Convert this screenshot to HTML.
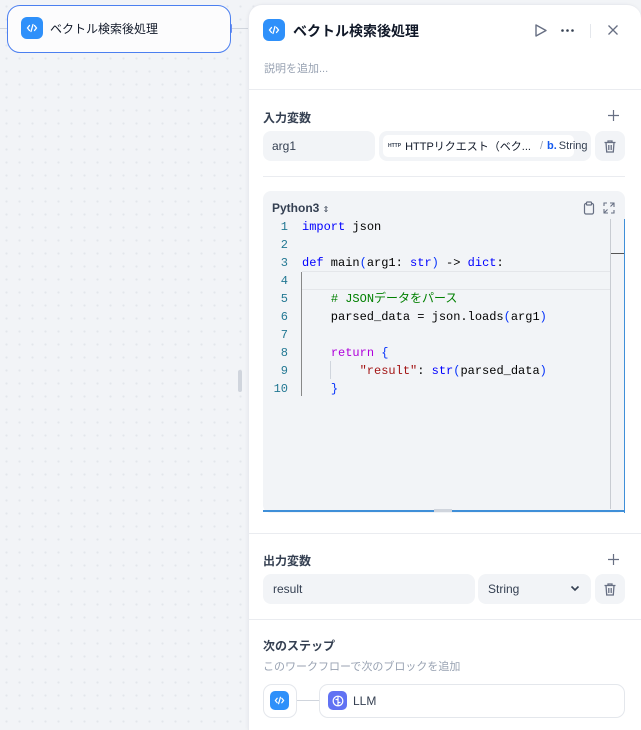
<!DOCTYPE html>
<html><head><meta charset="utf-8">
<style>
*{box-sizing:border-box;margin:0;padding:0}
html,body{width:641px;height:730px;overflow:hidden}
body{position:relative;font-family:"Liberation Sans","Noto Sans CJK JP",sans-serif;background:#f2f4f7;background-image:radial-gradient(#e3e6eb 1px,transparent 1.2px);background-size:13px 13px;color:#101828}
.node{position:absolute;left:7px;top:5px;width:224px;height:48px;background:#fcfcfd;border:1.5px solid #4b7ff0;border-radius:13px}
.ic{position:absolute;background:#2e90fa;border-radius:6px;display:flex;align-items:center;justify-content:center}
.panel{position:absolute;left:248px;top:4px;width:393px;height:726px;background:#fff;border-radius:14px 14px 0 0;border:1px solid #e9ebf0;border-right:none;border-bottom:none;box-shadow:0 1px 4px rgba(0,0,0,.06)}
.abs{position:absolute}
.sep{position:absolute;height:1px;background:#eaecf0}
.field{position:absolute;background:#f2f4f7;border-radius:8px;font-size:12px;color:#354052;display:flex;align-items:center}
.code{position:absolute;left:263px;top:191px;width:362px;height:322px;background:#f2f4f7;border-radius:8px}
.ln{position:absolute;left:268px;width:20px;text-align:right;font:12px/18px "Liberation Mono","DejaVu Sans Mono","Noto Sans CJK JP",monospace;color:#237893}
.cl{position:absolute;left:302px;font:12px/18px "Liberation Mono","DejaVu Sans Mono","Noto Sans CJK JP",monospace;color:#000;white-space:pre}
.k{color:#0000ff}.p{color:#af00db}.c{color:#008000}.s{color:#a31515}.b{color:#0431fa}
.plus{position:absolute;width:11px;height:11px}
</style></head><body>
<div style="position:absolute;left:0;top:28px;width:8px;height:1px;background:#d0d5dd"></div>
<div style="position:absolute;left:231px;top:28px;width:18px;height:1px;background:#d0d5dd"></div>
<div style="position:absolute;left:229px;top:24px;width:3px;height:9px;background:#6b8ef0;border-radius:1px"></div>
<div class="node">
 <div class="ic" style="left:13px;top:11px;width:22px;height:22px"><svg width="12" height="12" viewBox="0 0 12 12" fill="none" stroke="#fff" stroke-width="1.3" stroke-linecap="round"><path d="M3.5 3.5 1.5 6l2 2.5M8.5 3.5l2 2.5-2 2.5M7 2.5 5 9.5"/></svg></div>
 <div class="abs" style="left:42px;top:14px;font-size:12px;color:#101828">ベクトル検索後処理</div>
</div>
<div style="position:absolute;left:238px;top:370px;width:4px;height:22px;background:#d0d5dd;border-radius:2px"></div>
<div class="panel"></div>
<div class="ic" style="left:263px;top:19px;width:22px;height:22px"><svg width="12" height="12" viewBox="0 0 12 12" fill="none" stroke="#fff" stroke-width="1.3" stroke-linecap="round"><path d="M3.5 3.5 1.5 6l2 2.5M8.5 3.5l2 2.5-2 2.5M7 2.5 5 9.5"/></svg></div>
<div class="abs" style="left:293px;top:21px;font-size:14px;font-weight:600">ベクトル検索後処理</div>
<svg class="abs" style="left:534px;top:23px" width="14" height="16" viewBox="0 0 14 16" fill="none" stroke="#676f83" stroke-width="1.4" stroke-linejoin="round"><path d="M2 2v11l10-5.5z"/></svg>
<svg class="abs" style="left:561px;top:29px" width="13" height="3" viewBox="0 0 13 3" fill="#354052"><circle cx="1.5" cy="1.5" r="1.3"/><circle cx="6.5" cy="1.5" r="1.3"/><circle cx="11.5" cy="1.5" r="1.3"/></svg>
<div class="abs" style="left:590px;top:24px;width:1px;height:14px;background:#e4e7ec"></div>
<svg class="abs" style="left:607px;top:24px" width="12" height="12" viewBox="0 0 12 12" stroke="#676f83" stroke-width="1.3"><path d="M1.5 1.5l9 9M10.5 1.5l-9 9"/></svg>
<div class="abs" style="left:264px;top:60px;font-size:11px;color:#98a2b2">説明を追加...</div>
<div class="sep" style="top:89px;left:248px;right:0"></div>
<div class="abs" style="left:263px;top:109px;font-size:12px;font-weight:600;color:#354052">入力変数</div>
<svg class="plus" style="left:608px;top:110px" viewBox="0 0 11 11" stroke="#676f83" stroke-width="1.2"><path d="M5.5 0v11M0 5.5h11"/></svg>
<div class="field" style="left:263px;top:131px;width:112px;height:30px;padding-left:9px">arg1</div>
<div class="field" style="left:379px;top:131px;width:212px;height:30px;padding:0 4px">
 <div style="background:#fff;border-radius:5px;height:22px;width:191px;display:flex;align-items:center;padding-left:5px;font-size:11px;white-space:nowrap">
  <span style="font-size:5px;font-weight:bold;margin-right:4px">HTTP</span><span style="color:#101828">HTTPリクエスト（ベク...</span><span style="color:#98a2b2;margin:0 4px 0 9px">/</span><span style="color:#155aef;font-weight:600">b.</span><span style="color:#354052;margin-left:2px">String</span>
 </div>
</div>
<div class="field" style="left:595px;top:131px;width:30px;height:30px;justify-content:center">
 <svg width="14" height="15" viewBox="0 0 14 15" fill="none" stroke="#676f83" stroke-width="1.3"><path d="M1.5 3.5h11M5 3.5V2h4v1.5M3 3.5l.7 9.5h6.6l.7-9.5M5.8 6v5M8.2 6v5"/></svg>
</div>
<div class="sep" style="top:176px;left:263px;width:362px"></div>
<div class="code">
 <div class="abs" style="left:9px;top:10px;font-size:12px;font-weight:600;color:#354052">Python3 <span style="font-size:8px;font-weight:normal">⇕</span></div>
 <svg class="abs" style="left:320px;top:10px" width="12" height="14" viewBox="0 0 12 14" fill="none" stroke="#676f83" stroke-width="1.2"><rect x="1.5" y="2.5" width="9" height="10.5" rx="1.5"/><rect x="3.5" y="1" width="5" height="3" rx=".8" fill="#f2f4f7"/></svg>
 <svg class="abs" style="left:340px;top:11px" width="12" height="12" viewBox="0 0 12 12" fill="none" stroke="#676f83" stroke-width="1.1"><path d="M7 1h4v4M11 1 7.5 4.5M5 11H1V7M1 11l3.5-3.5M1 4V1h3M11 8v3H8"/></svg>
 <div class="abs" style="left:347px;top:28px;width:1px;height:290px;background:#c8ccd2"></div>
 <div class="abs" style="left:348px;top:28px;width:14px;height:294px;border-right:1.5px solid #3f8fd8"></div>
 <div class="abs" style="left:348px;top:62px;width:13px;height:1px;background:#555"></div>
 <div class="abs" style="left:0;top:319px;width:362px;height:1.5px;background:#3f8fd8"></div>
 <div class="abs" style="left:171px;top:318px;width:18px;height:3px;background:#d0d5dd"></div>
 <div class="abs" style="left:39px;top:80px;width:308px;height:19px;border-top:1px solid #e4e6ea;border-bottom:1px solid #e4e6ea"></div>
 <div class="abs" style="left:38px;top:81px;width:1px;height:124px;background:#888"></div>
 <div class="abs" style="left:67px;top:170px;width:1px;height:18px;background:#d0d5dd"></div>
</div>
<div class="ln" style="top:218px">1</div><div class="ln" style="top:236px">2</div><div class="ln" style="top:254px">3</div><div class="ln" style="top:272px">4</div><div class="ln" style="top:290px">5</div><div class="ln" style="top:308px">6</div><div class="ln" style="top:326px">7</div><div class="ln" style="top:344px">8</div><div class="ln" style="top:362px">9</div><div class="ln" style="top:380px">10</div>
<div class="cl" style="top:218px"><span class="k">import</span> json</div>
<div class="cl" style="top:254px"><span class="k">def</span> main<span class="b">(</span>arg1: <span class="k">str</span><span class="b">)</span> -&gt; <span class="k">dict</span>:</div>
<div class="cl" style="top:290px">    <span class="c"># JSONデータをパース</span></div>
<div class="cl" style="top:308px">    parsed_data = json.loads<span class="b">(</span>arg1<span class="b">)</span></div>
<div class="cl" style="top:344px">    <span class="p">return</span> <span class="b">{</span></div>
<div class="cl" style="top:362px">        <span class="s">"result"</span>: <span class="k">str</span><span class="b">(</span>parsed_data<span class="b">)</span></div>
<div class="cl" style="top:380px">    <span class="b">}</span></div>
<div class="sep" style="top:533px;left:248px;right:0"></div>
<div class="abs" style="left:263px;top:552px;font-size:12px;font-weight:600;color:#354052">出力変数</div>
<svg class="plus" style="left:608px;top:554px" viewBox="0 0 11 11" stroke="#676f83" stroke-width="1.2"><path d="M5.5 0v11M0 5.5h11"/></svg>
<div class="field" style="left:263px;top:574px;width:212px;height:30px;padding-left:10px">result</div>
<div class="field" style="left:478px;top:574px;width:113px;height:30px;padding-left:10px">String
 <svg style="position:absolute;right:11px;top:11px" width="10" height="7" viewBox="0 0 10 7" fill="none" stroke="#354052" stroke-width="1.6"><path d="M1.5 1.5 5 5l3.5-3.5"/></svg></div>
<div class="field" style="left:595px;top:574px;width:30px;height:30px;justify-content:center">
 <svg width="14" height="15" viewBox="0 0 14 15" fill="none" stroke="#676f83" stroke-width="1.3"><path d="M1.5 3.5h11M5 3.5V2h4v1.5M3 3.5l.7 9.5h6.6l.7-9.5M5.8 6v5M8.2 6v5"/></svg>
</div>
<div class="sep" style="top:619px;left:248px;right:0"></div>
<div class="abs" style="left:263px;top:637px;font-size:12px;font-weight:600;color:#354052">次のステップ</div>
<div class="abs" style="left:263px;top:658px;font-size:11px;color:#98a2b2">このワークフローで次のブロックを追加</div>
<div class="abs" style="left:263px;top:684px;width:34px;height:34px;border:1px solid #e4e7ec;border-radius:9px;background:#fff"></div>
<div class="ic" style="left:270px;top:691px;width:19px;height:19px;border-radius:5px"><svg width="11" height="11" viewBox="0 0 12 12" fill="none" stroke="#fff" stroke-width="1.3" stroke-linecap="round"><path d="M3.5 3.5 1.5 6l2 2.5M8.5 3.5l2 2.5-2 2.5M7 2.5 5 9.5"/></svg></div>
<div class="abs" style="left:297px;top:700px;width:22px;height:1px;background:#d0d5dd"></div>
<div class="abs" style="left:319px;top:684px;width:306px;height:34px;border:1px solid #e4e7ec;border-radius:9px;background:#fff"></div>
<div class="ic" style="left:328px;top:691px;width:19px;height:19px;border-radius:5px;background:#6172f3"><svg width="12" height="12" viewBox="0 0 12 12" fill="none" stroke="#fff" stroke-width="1.2"><circle cx="6" cy="6" r="4.8"/><path d="M6 1.5v9M3.5 4.5h2.5M6 7.5h2.5"/></svg></div>
<div class="abs" style="left:353px;top:694px;font-size:12px;color:#354052">LLM</div>
</body></html>
